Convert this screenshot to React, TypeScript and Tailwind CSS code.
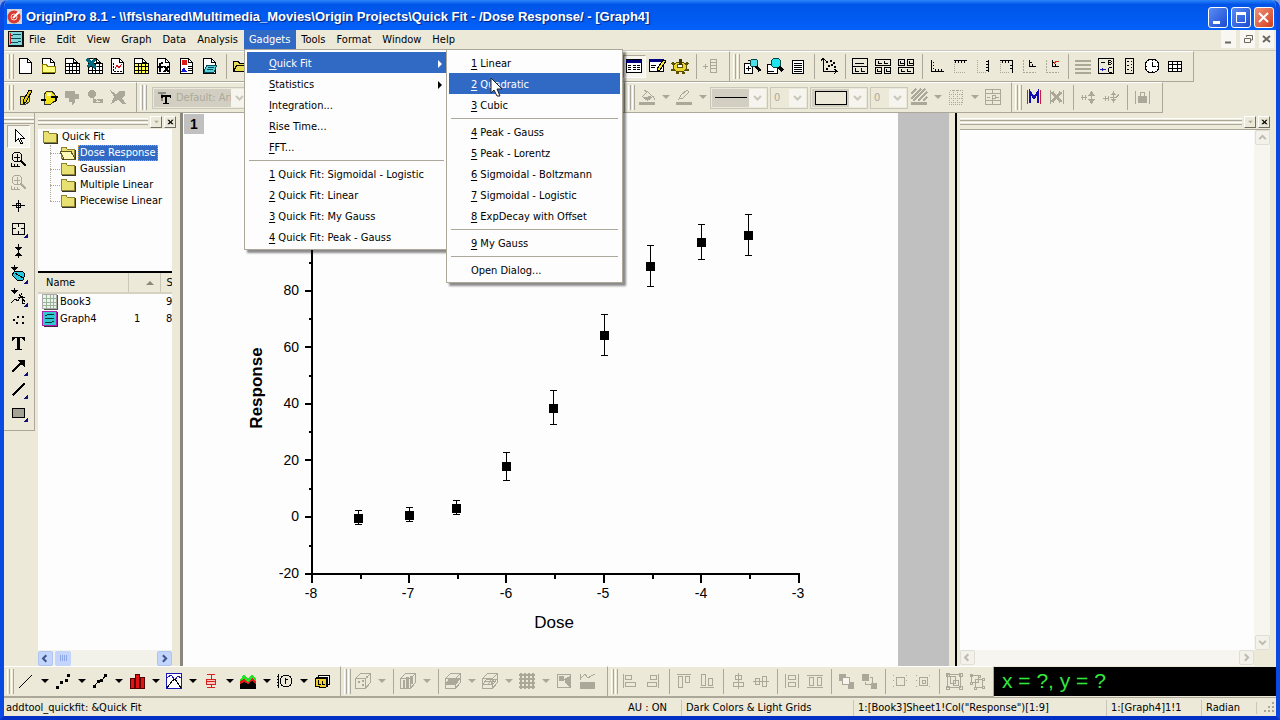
import type { ReactNode } from "react";

const G = "#aca899";

const page = (
    <>
        <path d="M2.5 1.5h8l4 4v11h-12z" fill="#fff" stroke="#000" />
        <path d="M10.5 1.5v4h4" fill="none" stroke="#000" />
    </>
);

const grid = (fill: string) => (
    <>
        <rect x="2.5" y="6.5" width="14" height="10" fill={fill} stroke="#000" />
        <path d="M2 9.5h15M2 13.5h15M6.5 6v11M9.5 6v11M13.5 6v11" stroke="#000" />
    </>
);

const cube = <path d="M1.5 6.5l5-5h10v9l-5 6h-10zM1.5 6.5h10v10M11.5 6.5l5-5" fill="none" stroke={G} />;

const lens = (c: string) => (
    <>
        <circle cx="8" cy="7" r="5" fill="none" stroke={c} />
        <path d="M5 7.5h6M8.5 4v7M2 16.5h9M2.5 13v3M5.5 14v2M8.5 14v2" stroke={c} />
        <path d="M12 11l5 5" stroke={c} strokeWidth="2" />
    </>
);

const ICONS: Record<string, ReactNode> = {
    "New Project": page,
    "New Folder": (
        <>
            {page}
            <path d="M2.5 15.5v-8h4l1 2h8v6z" fill="#ffff7b" stroke="#8a7a00" />
        </>
    ),
    "New Workbook": <>{page}{grid("#fff")}</>,
    "New Excel": (
        <>
            {page}
            {grid("#fff")}
            <path d="M1 2l9 9M9 2l-7 8" stroke="#00667a" strokeWidth="3" />
        </>
    ),
    "New Graph": (
        <>
            {page}
            <path d="M4.5 6v8.5h9" fill="none" stroke="#000" strokeDasharray="2 1" />
            <path d="M6 12l2-4 2 3 3-4" fill="none" stroke="#d01818" />
        </>
    ),
    "New Matrix": <>{page}{grid("#ffff4c")}</>,
    "New Function": (
        <>
            {page}
            <path d="M5 15V8q0-2 3-2M3 10h5M9 9l5 6M14 9l-5 6" fill="none" stroke="#000" strokeWidth="2" />
        </>
    ),
    "New Layout": (
        <>
            {page}
            <path d="M4 3h5v5h-5z" fill="#e01818" />
            <path d="M3 15l3-5 3 5z" fill="#1818d8" />
            <path d="M10 9.5h5M10 11.5h5M10 13.5h5" stroke="#000" />
        </>
    ),
    "New Notes": (
        <>
            {page}
            <path d="M3 14l3-6h10l-3 7h-10z" fill="#5ed0d8" stroke="#004c58" />
            <path d="M7 10.5h6M6 12.5h6" stroke="#004c58" />
        </>
    ),
    Open: <path d="M1.5 14.5v-10h5l1 2h7v2M1.5 14.5l3-6h12l-3 6z" fill="#e8dc50" stroke="#000" />,
    "Project Explorer": (
        <>
            <rect x="1.5" y="2.5" width="15" height="13" fill="#fff" stroke="#000" />
            <path d="M1 3h16v3h-16z" fill="#000080" />
            <path d="M3 8.5h3M8 8.5h3M12 8.5h3M3 10.5h3M8 10.5h3M12 10.5h3M3 12.5h3M8 12.5h3M12 12.5h3" stroke="#000" />
        </>
    ),
    "Results Log": (
        <>
            <rect x="1.5" y="2.5" width="14" height="12" fill="#fff" stroke="#000" />
            <path d="M1 2h15v3h-15z" fill="#000080" />
            <path d="M3 8.5h5M3 10.5h4" stroke="#000" />
            <path d="M15 3l-6 9v3l3-2 6-9z" fill="#ffe820" stroke="#000" />
        </>
    ),
    "Custom Routine": (
        <>
            <path d="M9 4v-2M3 6l-2 2M15 6l2 2M2 12l-1 2M16 12l1 2M6 15v2M12 15v2" stroke="#5a5000" strokeWidth="3" />
            <ellipse cx="9" cy="10" rx="7" ry="5" fill="#ead62c" stroke="#5a5000" />
            <ellipse cx="9" cy="9" rx="3" ry="2" fill="#fff" stroke="#5a5000" />
            <path d="M8 2h3v6h-3z" fill="#3a3400" />
        </>
    ),
    "Add Columns": (
        <>
            <path d="M1 9.5h5M3.5 7v5" stroke={G} />
            <path d="M8.5 2.5h6v13h-6zM8 5.5h6M8 8.5h6M8 11.5h6" fill="none" stroke={G} />
        </>
    ),
    "Zoom Pages": (
        <>
            <path d="M1.5 6.5h8v10h-8zM5 3.5h5M3 11.5h5M5.5 9v5" fill="#fff" stroke="#000" />
            <circle cx="11" cy="6" r="4" fill="#4ce0e8" stroke="#044" />
            <path d="M13 9l4 5" stroke="#000" strokeWidth="3" />
        </>
    ),
    "Zoom Sheet": (
        <>
            <path d="M1.5 7.5h10v9h-10zM1 14.5h7" fill="#fff" stroke="#000" />
            <circle cx="10" cy="6" r="5" fill="#20e4ec" stroke="#044" />
            <path d="M13 10l4 4" stroke="#000" strokeWidth="3" />
        </>
    ),
    "Whole Page": (
        <>
            <rect x="3.5" y="3.5" width="11" height="13" fill="#fff" stroke="#000" />
            <path d="M5 6.5h8M5 8.5h8M5 10.5h8M5 12.5h8M5 14.5h8" stroke="#000" />
        </>
    ),
    Rescale: (
        <>
            <path d="M3.5 1v13.5h14M1 4l2-3 3 3M14 12l3 2-3 3" fill="none" stroke="#000" />
            <path d="M6 4h2v2h-2zM10 3h2v2h-2zM13 5h2v2h-2zM8 8h2v2h-2zM11 7h2v2h-2zM14 9h2v2h-2zM6 11h2v2h-2z" fill="#000" />
        </>
    ),
    "Two Panels": <path d="M1.5 1.5h15v15h-15zM1 9.5h16M4 6.5h9M4.5 11v3.5h3M10.5 11v3.5h3" fill="none" stroke="#000" />,
    "Four Panels": <path d="M1.5 2.5h15v6h-15zM1.5 10.5h6v6h-6zM10.5 10.5h6v6h-6zM4.5 4v2.5h3M10.5 4v2.5h3M3.5 12v2.5h3M12.5 12v2.5h3" fill="none" stroke="#000" />,
    "Nine Panels": <path d="M1.5 2.5h6v6h-6zM10.5 2.5h6v6h-6zM1.5 10.5h15v6h-15zM3.5 4v2.5h3M12.5 4v2.5h3M4.5 12v2.5h3M10.5 12v2.5h3" fill="none" stroke="#000" />,
    "Axis Bottom Left": <path d="M3.5 3v11.5h12M5 5.5h1M5 8.5h1M5 11.5h1M7.5 12v2M10.5 12v2M13.5 12v2" fill="none" stroke="#000" />,
    "Axis Top": (
        <>
            <path d="M3.5 5v10.5h11" fill="none" stroke={G} strokeDasharray="1 1" />
            <path d="M3 3.5h13M4.5 4v2M7.5 4v2M10.5 4v2M13.5 4v2" stroke="#000" />
        </>
    ),
    "Axis Right": (
        <>
            <path d="M3.5 3v12.5h9" fill="none" stroke={G} strokeDasharray="1 1" />
            <path d="M14.5 3v12M12 4.5h2M12 7.5h2M12 10.5h2M12 13.5h2" stroke="#000" />
        </>
    ),
    "Axis Top Right": (
        <>
            <path d="M3.5 5v10.5h9" fill="none" stroke={G} strokeDasharray="1 1" />
            <path d="M3 3.5h12.5v12M5.5 4v2M8.5 4v2M11.5 4v2M13 8.5h2M13 11.5h2" fill="none" stroke="#000" />
        </>
    ),
    "Inset Graph": (
        <>
            <path d="M3.5 3v12.5h12" fill="none" stroke={G} strokeDasharray="2 1" />
            <path d="M9.5 3v6.5h6M10 5.5h2M12.5 7v2" fill="none" stroke="#000" />
        </>
    ),
    "Inset Data": (
        <>
            <path d="M3.5 3v12.5h12" fill="none" stroke={G} strokeDasharray="2 1" />
            <path d="M9.5 3v6.5h6M10 5.5h2M12.5 7v2" fill="none" stroke="#000" />
            <path d="M11 7l2-3h3" fill="none" stroke="#d03010" />
        </>
    ),
    "Color Scale": <path d="M1 4h16M1 8h16M1 12h16M1 16h16" stroke={G} strokeWidth="2" />,
    Legend: (
        <>
            <rect x="1.5" y="1.5" width="15" height="15" fill="none" stroke="#000" />
            <path d="M4 5.5h4M11.5 3v5M11 3.5h3M11 5.5h3M11 7.5h3M14.5 4v1M14.5 6v1M12 10.5h3M11.5 11v4M12 15.5h3" stroke="#000" />
            <path d="M3 12.5h6M5.5 11v3" stroke="#1818c8" />
        </>
    ),
    "XY Scale": <path d="M5.5 1.5h8v15h-8zM7 4.5h2M7 8.5h2M7 12.5h2M11 4.5h1M11 7.5h1M11 10.5h1M11 13.5h1" fill="none" stroke="#000" />,
    "Date and Time": (
        <>
            <circle cx="9" cy="9" r="7" fill="#fff" stroke="#000" />
            <path d="M9 5v4.5h4M9 3v1M9 14v1M3 9h1M14 9h1" fill="none" stroke="#000" />
        </>
    ),
    "New Table": <path d="M2.5 4.5h13v10h-13zM2 7.5h14M2 11.5h14M6.5 4v11M11.5 4v11" fill="#fff" stroke="#000" />,
    "Edit Mode": (
        <>
            <path d="M3 8h9v6l-3 2h-6z" fill="#e8e020" stroke="#333" />
            <path d="M12 2l3 1-6 11-3 2v-3z" fill="#e0c010" stroke="#000" />
        </>
    ),
    "Add Plot": (
        <>
            <path d="M4 7l3-4h5l3 4v6l-4 3h-7z" fill="#f0e418" stroke="#333" />
            <path d="M1 12h5M11 9h6l-2 5" fill="none" stroke="#000" strokeWidth="2" />
            <path d="M7 5h4v3h-4z" fill="#fffbb0" />
        </>
    ),
    "Grid Tool": <path d="M2 3h10v3h4v5h-4v3l-3 3v-3h-3v-4h-4z" fill={G} />,
    "Mask Tool": (
        <>
            <circle cx="6" cy="6" r="4" fill={G} />
            <path d="M7 10v4h8M9 14l3-3h4v3z" stroke={G} fill={G} />
        </>
    ),
    "Clear Tool": <path d="M1 2l6 4 3-3h6v5l-3 2 4 6h-4l-4-4-7 4 3-7z" fill={G} />,
    "Fill Color": (
        <>
            <path d="M4.5 8.5l5-5 5 5-5 4zM9 4l-3-2M15 8l2 4" fill="none" stroke={G} />
            <path d="M5 9l4 3 5-4z" fill={G} />
            <path d="M1 14h16v3h-16z" fill={G} />
        </>
    ),
    "Line Color": (
        <>
            <path d="M4 11l2-4 6-5 2 2-6 6z" fill="none" stroke={G} />
            <path d="M1 14h16v3h-16z" fill={G} />
        </>
    ),
    "Fill Pattern": (
        <>
            <path d="M1 6l5-5M1 11l10-10M3 13l12-12M8 13l9-9M13 13l4-4" stroke={G} strokeWidth="2" />
            <path d="M1 14h16v3h-16z" fill={G} />
        </>
    ),
    "Grid Lines": <path d="M2.5 2.5h13v12h-13zM2 6.5h13M2 10.5h13M6.5 2v13M10.5 2v13M2 16.5h14" fill="none" stroke={G} strokeDasharray="1 1" />,
    "Merge Cells": <path d="M1.5 1.5h15v15h-15zM1 5.5h15M1 12.5h15M8.5 1v4M8.5 13v3M3 9.5h3M12 9.5h3M8 7.5h3v3h-3zM8 11v1" fill="none" stroke={G} />,
    "Mask Points": (
        <>
            <path d="M2.5 2v14M15.5 2v14" stroke="#d01838" />
            <path d="M5 15v-11l4 6 4-6v11" fill="none" stroke="#1010b0" strokeWidth="2" />
        </>
    ),
    "Unmask Points": (
        <>
            <path d="M2.5 2v14M15.5 2v14" stroke={G} />
            <path d="M4 4l9 10M13 4l-9 10" stroke={G} strokeWidth="3" />
        </>
    ),
    "Move Points": (
        <>
            <path d="M2 9.5h6M3.5 7v5M6.5 7v5M12.5 4v11" stroke={G} />
            <path d="M9 8l3.5-5 3.5 5zM9 11l3.5 5 3.5-5z" fill={G} />
        </>
    ),
    "Swap Points": (
        <>
            <path d="M1 10.5h6M3.5 8v5M6.5 8v5M8 9.5h6l3-3M11.5 4v10" fill="none" stroke={G} />
            <path d="M9 7l2.5-4 2.5 4zM9 11l2.5 4 2.5-4z" fill={G} />
        </>
    ),
    Lock: (
        <>
            <path d="M5 8h9v7h-9z" fill={G} />
            <path d="M7.5 8v-3.5h4v3.5M2.5 3v13M16.5 3v13" fill="none" stroke={G} />
        </>
    ),
    Pointer: <path d="M6.5 2.5v12l3-3 2 5h2l-2-5h4z" fill="#fff" stroke="#000" />,
    "Zoom In": lens("#000"),
    "Zoom Out": lens(G),
    "Screen Reader": <path d="M3 9.5h13M9.5 4v12M7.5 7.5h4v4h-4z" fill="none" stroke="#000" />,
    "Data Reader": <path d="M3.5 4.5h12v11h-12zM9.5 4v4M9.5 12v4M3 9.5h4M12 9.5h4" fill="none" stroke="#000" />,
    "Data Selector": (
        <>
            <path d="M9.5 2v14" stroke="#000" />
            <path d="M6 5h7l-3.5 4zM6 14h7l-3.5-4z" fill="#000" />
        </>
    ),
    "Selection Mask": (
        <>
            <path d="M5.5 0v4" stroke="#000" />
            <path d="M2 2h7l-3.5 4z" fill="#000" />
            <path d="M3 10l3-4h7l3 3-2 6h-6z" fill="#28c8dc" stroke="#000" />
            <path d="M6 8l8 5" stroke="#000" />
        </>
    ),
    "Draw Data": (
        <>
            <path d="M5.5 0v4" stroke="#000" />
            <path d="M2 2h7l-3.5 4z" fill="#000" />
            <path d="M2 15l4-4 3 2 4-8M9 9h7M10 6l6 8M13 8v7h3" fill="none" stroke="#000" />
        </>
    ),
    "Point Cluster": <path d="M4 8h2v2h-2zM8 5h2v2h-2zM13 5h2v2h-2zM7 11h2v2h-2zM13 11h2v2h-2z" fill="#000" />,
    Text: <path d="M3 3h13v4h-1q0-2-3-3h-1v10q0 1 2 1v1h-7v-1q2 0 2-1v-10h-1q-3 1-3 3h-1z" fill="#000" />,
    Arrow: <path d="M3 15l9-9" stroke="#000" strokeWidth="2" />,
    Line: <path d="M3.5 15.5l12-12" stroke="#000" strokeWidth="2" />,
    Rectangle: <rect x="3" y="5" width="12" height="9" fill="#a4a294" stroke="#000" />,
    "Line Plot": <path d="M2 16L15 3" stroke="#000" />,
    "Scatter Plot": <path d="M2 14h3v3h-3zM6 9h3v3h-3zM11 7h3v3h-3zM13 2h3v3h-3z" fill="#000" />,
    "Line Symbol": (
        <>
            <path d="M2 13h3v3h-3zM6 8h3v3h-3zM9 7h3v3h-3zM13 2h3v3h-3z" fill="#000" />
            <path d="M3 14l5-5 3-1 4-5" fill="none" stroke="#000" />
        </>
    ),
    "Column Plot": <path d="M2.5 6.5h4v10h-4zM7.5 2.5h4v14h-4zM12.5 5.5h4v11h-4z" fill="#e01414" stroke="#500" />,
    "Area Plot": (
        <>
            <rect x="1.5" y="1.5" width="15" height="15" fill="#fff" stroke="#1818b8" />
            <path d="M2 6l4-3 4 5 3-4 3 2" fill="none" stroke="#1818b8" />
            <path d="M2 16l5-7 3-2 6 9" fill="none" stroke="#000" />
        </>
    ),
    "Box Chart": (
        <>
            <path d="M5 2.5h8M5 15.5h8M9.5 2v14" stroke="#d82020" />
            <path d="M4.5 7.5h9v5h-9z" fill="#f8c8c0" stroke="#d82020" />
            <path d="M4 9.5h10" stroke="#d82020" />
        </>
    ),
    "Stack Area": (
        <>
            <path d="M1 8l4-6 4 5 4-5 4 5v3h-16z" fill="#28e028" />
            <path d="M1 9l4-2 4 4 4-5 4 3v4h-16z" fill="#e01818" />
            <path d="M1 12l4-2 4 2 4-3 4 3v5h-16z" fill="#000" />
        </>
    ),
    "Polar Plot": (
        <>
            <path d="M2.5 2v14M1 4.5h2M1 7.5h2M1 10.5h2M1 13.5h2" stroke="#000" />
            <circle cx="10" cy="9" r="6" fill="none" stroke="#000" />
            <path d="M9.5 6v6M10 7.5h2" stroke="#000" />
        </>
    ),
    "Template Library": (
        <>
            <path d="M5.5 3.5h11v9h-11z" fill="#fff" stroke="#000" />
            <path d="M3.5 5.5h11v9h-11z" fill="#fff" stroke="#000" />
            <path d="M2 6h11v9l-2 1-9-2z" fill="#f0d030" stroke="#000" />
            <path d="M5.5 8v4h2M9.5 9v3h2" fill="none" stroke="#000" />
        </>
    ),
    "3D Scatter": <>{cube}<path d="M4 9h2v2h-2zM8 12h2v2h-2zM8 8h2v2h-2zM12 4h2v2h-2z" fill={G} /></>,
    "3D Bars": <>{cube}<path d="M4 8h2v8h-2zM7 5h3v11h-3zM11 4h3v8h-3z" fill={G} /></>,
    "3D Surface": <>{cube}<path d="M2 12l4-6h10l-4 6z" fill={G} stroke={G} /></>,
    "3D Wire": <>{cube}<path d="M2 12l4-5h10l-4 5zM4 9.5h11M7 12l4-5M10 12l3-5" fill="none" stroke={G} /></>,
    Contour: <path d="M1 3h16M1 7h16M1 11h16M1 15h16M3 1v16M7 1v16M11 1v16M15 1v16" stroke={G} strokeWidth="2" />,
    Image: (
        <>
            <rect x="2.5" y="2.5" width="13" height="13" fill="none" stroke={G} />
            <path d="M4 4h5v5h-5zM9 7l6-3v11l-4-3z" fill={G} />
        </>
    ),
    Profile: (
        <>
            <path d="M2 10h15v7h-15z" fill={G} />
            <path d="M2.5 2v6M3 6l4-4 3 4 3-2 4-2" fill="none" stroke={G} />
        </>
    ),
    "Align Left": <path d="M2.5 2v14M4.5 3.5h6v4h-6zM4.5 10.5h10v4h-10z" fill="none" stroke={G} />,
    "Align Right": <path d="M14.5 2v14M6.5 3.5h6v4h-6zM3.5 10.5h9v4h-9z" fill="none" stroke={G} />,
    "Align Top": <path d="M2 2.5h14M3.5 4.5h4v11h-4zM10.5 4.5h4v6h-4z" fill="none" stroke={G} />,
    "Align Bottom": <path d="M2 15.5h14M3.5 2.5h4v11h-4zM10.5 6.5h4v7h-4z" fill="none" stroke={G} />,
    "Center Vertical": <path d="M9.5 1v16M6.5 3.5h6v4h-6zM4.5 10.5h10v4h-10z" fill="none" stroke={G} />,
    "Center Horizontal": <path d="M1 9.5h16M3.5 6.5h4v6h-4zM10.5 4.5h4v10h-4z" fill="none" stroke={G} />,
    "Uniform Width": <path d="M2.5 2v14M15.5 2v14M5.5 3.5h7v4h-7zM5.5 10.5h7v4h-7z" fill="none" stroke={G} />,
    "Uniform Height": <path d="M1 3.5h16M1 15.5h16M3.5 5.5h4v8h-4zM11.5 5.5h4v8h-4z" fill="none" stroke={G} />,
    Front: (
        <>
            <path d="M2 2h7v3h-4v4h-3zM11 13h2v-3h4v7h-6z" fill={G} />
            <path d="M5.5 5.5h7v7h-7z" fill="#f6f5ee" stroke={G} />
        </>
    ),
    Back: (
        <>
            <path d="M2 2h7v7h-7zM11 11h6v6h-6z" fill={G} />
            <path d="M9.5 5.5h3v5M5.5 9.5v3h5" fill="none" stroke={G} />
        </>
    ),
    "Front Data": <path d="M5.5 5.5h8v8h-8zM2 3h1M2 8h1M2 14h1M15 3h1M15 8h1" fill="none" stroke={G} />,
    "Back Data": <path d="M5.5 5.5h8v8h-8zM8 8h3v3h-3zM2 3h1M2 8h1M2 14h1M15 3h1M15 14h1" fill="none" stroke={G} />,
    Group: <path d="M2.5 2.5h13v13h-13zM5.5 4.5h5v7h-5zM8.5 8.5h5v5h-5zM1 1h3v3h-3zM14 14h3v3h-3zM14 1h3v3h-3zM1 14h3v3h-3z" fill="none" stroke={G} />,
    Ungroup: <path d="M3.5 3.5h7v7h-7zM7.5 7.5h7v8h-7zM2 2h2v2h-2zM10 3h2v2h-2zM2 10h2v2h-2zM14 6h2v2h-2zM14 14h2v2h-2zM6 15h2v2h-2z" fill="none" stroke={G} />,
};

const PRESSED = ["Project Explorer", "Pointer"];
const FLYOUTS = ["Data Reader", "Selection Mask", "Draw Data", "Arrow", "Line", "Rectangle"];

const ToolButton = ({ name }: { name: string }) => (
    <button
        type="button"
        aria-label={name}
        className={`flex h-[23px] w-[23px] flex-none items-start border pt-px pl-px ${
            PRESSED.includes(name) ? "border-[#aca899] border-r-white border-b-white bg-[#f6f5ee]" : "border-transparent"
        }`}
    >
        <svg width="18" height="18" viewBox="0 0 18 18" shapeRendering="crispEdges" className="flex-none overflow-visible">
            {ICONS[name] ?? ICONS["New Project"]}
            {name === "Arrow" && <path d="M8 3h8v8l-3-3h-2v-2z" fill="#000" />}
            {FLYOUTS.includes(name) && <path d="M19 14v5h-5z" fill="#101078" />}
        </svg>
    </button>
);

const DropArrow = ({ name, off }: { name: string; off: boolean }) => (
    <button type="button" aria-label={`${name} options`} className="flex h-[23px] w-[14px] flex-none items-center justify-center">
        <svg width="8" height="5" viewBox="0 0 8 5">
            <path d="M0 0h8l-4 4z" fill={off ? G : "#000"} />
        </svg>
    </button>
);

const Grip = () => (
    <span className="mr-px ml-[3px] flex flex-none gap-px self-stretch py-0.5">
        <span className="w-[3px] border-r border-l border-r-[#aca899] border-l-white"></span>
        <span className="w-[3px] border-r border-l border-r-[#aca899] border-l-white"></span>
    </span>
);

/* "|" is a separator, a trailing ">" adds a drop arrow, "!" greys that arrow out */
const Tools = ({ items }: { items: string[] }) => (
    <>
        {items.map((item, i) => {
            if (item === "|") {
                return <span key={i} className="mr-[3px] ml-1 h-[25px] w-px flex-none bg-[#aca899]"></span>;
            }
            const name = item.replace(/[>!]/g, "");
            return (
                <span key={i} className="flex flex-none">
                    <ToolButton name={name} />
                    {item.includes(">") && <DropArrow name={name} off={item.includes("!")} />}
                </span>
            );
        })}
    </>
);

const Bar = ({ children, className = "pr-1.5" }: { children: ReactNode; className?: string }) => (
    <div className={`flex h-[31px] flex-none items-center border-t border-r border-b border-t-white border-r-[#aca899] border-b-[#aca899] ${className}`}>
        <Grip />
        {children}
    </div>
);

interface ComboProps {
    label: string;
    options: string[];
    className: string;
    selectClass?: string;
    children?: ReactNode;
}

const Combo = ({ label, options, className, selectClass = "", children }: ComboProps) => (
    <span className={`relative flex h-[22px] flex-none items-center border border-[#c9c7ba] bg-[#ece9d8] p-px ${className}`}>
        <select aria-label={label} disabled className={`h-full min-w-0 flex-1 appearance-none text-[#aca899] ${selectClass}`}>
            {options.map((o) => (
                <option key={o}>{o}</option>
            ))}
        </select>
        <span className="pointer-events-none absolute inset-y-0 left-1 flex items-center">{children}</span>
        <span className="flex h-full w-[17px] flex-none items-center justify-center bg-[#f5f4ee]">
            <svg width="9" height="6" viewBox="0 0 9 6">
                <path d="M1 1l3.5 3.5L8 1" fill="none" stroke="#c9c7ba" strokeWidth="2" />
            </svg>
        </span>
    </span>
);

const NEW_TOOLS = ["New Project", "New Folder", "New Workbook", "New Excel", "New Graph", "New Matrix", "New Function", "New Layout", "New Notes", "|", "Open", "Open", "New Workbook", "New Notes", "|", "New Graph", "New Excel", "New Matrix", "|", "New Project"];
const STANDARD_TOOLS = ["New Layout", "New Graph", "|", "New Table", "Rescale", "New Notes", "Whole Page", "Open", "|", "Project Explorer", "Results Log", "Custom Routine", "|", "Add Columns"];
const GRAPH_TOOLS = ["Zoom Pages", "Zoom Sheet", "Whole Page", "|", "Rescale", "|", "Two Panels", "Four Panels", "Nine Panels", "|", "Axis Bottom Left", "Axis Top", "Axis Right", "Axis Top Right", "Inset Graph", "Inset Data", "|", "Color Scale", "Legend", "XY Scale", "Date and Time", "New Table"];
const FORMAT_TOOLS = ["Text", "Text", "Text", "Text", "Text", "Text", "Align Left", "Center Vertical", "Align Right", "Align Top", "Center Horizontal", "Align Bottom", "Text", "Text"];
const SIDE_TOOLS = ["Pointer", "Zoom In", "Zoom Out", "Screen Reader", "Data Reader", "Data Selector", "Selection Mask", "Draw Data", "Point Cluster", "Text", "Arrow", "Line", "Rectangle"];
const PLOT_TOOLS = ["Line Plot>", "Scatter Plot>", "Line Symbol>", "Column Plot>", "Area Plot>", "Box Chart>", "Stack Area>", "Polar Plot>", "Template Library"];
const PLOT3D_TOOLS = ["3D Scatter>!", "|", "3D Bars>!", "|", "3D Surface>!", "3D Wire>!", "Contour>!", "Image", "Profile"];
const ARRANGE_TOOLS = ["Align Left", "Align Right", "|", "Align Top", "Align Bottom", "|", "Center Vertical", "Center Horizontal", "|", "Uniform Width", "Uniform Height", "|", "Front", "Back", "|", "Front Data", "Back Data", "|", "Group", "Ungroup"];

const GADGETS = ["Quick Fit", "Statistics", "Integration...", "Rise Time...", "FFT...", "", "1 Quick Fit: Sigmoidal - Logistic", "2 Quick Fit: Linear", "3 Quick Fit: My Gauss", "4 Quick Fit: Peak - Gauss"];
const QUICK_FIT = ["1 Linear", "2 Quadratic", "3 Cubic", "", "4 Peak - Gauss", "5 Peak - Lorentz", "6 Sigmoidal - Boltzmann", "7 Sigmoidal - Logistic", "8 ExpDecay with Offset", "", "9 My Gauss", "", "Open Dialog..."];

const Menu = ({ items, active, className, children }: { items: string[]; active: string; className: string; children?: ReactNode }) => (
    <div role="menu" className={`absolute border border-[#aca899] bg-[#fdfdfd] p-0.5 text-black shadow-[3px_3px_2px_rgba(0,0,0,0.45)] ${className}`}>
        {items.map((item, i) =>
            item === "" ? (
                <div key={i} className="mx-0.5 flex h-1.5 items-center">
                    <div className="h-px w-full bg-[#aca899]"></div>
                </div>
            ) : (
                <button
                    key={i}
                    type="button"
                    role="menuitem"
                    className={`flex h-[21px] w-full items-center justify-between pt-0.5 pr-1 pl-[22px] whitespace-nowrap ${item === active ? "bg-[#316ac5] text-white" : ""}`}
                >
                    <span>
                        <span className={item === "Open Dialog..." ? "" : "underline underline-offset-2"}>{item[0]}</span>
                        {item.slice(1)}
                    </span>
                    {(item === "Quick Fit" || item === "Statistics") && (
                        <svg width="4" height="8" viewBox="0 0 4 8">
                            <path d="M0 0v8l4-4z" fill="currentColor" />
                        </svg>
                    )}
                </button>
            )
        )}
        {children}
    </div>
);

const MenuBar = () => (
    <nav className="flex h-[21px] flex-none items-start border-b border-[#c9c7ba] pl-1">
        <svg width="16" height="16" viewBox="0 0 16 16" shapeRendering="crispEdges" className="mt-px flex-none">
            <path d="M0 0h16v16h-16z" fill="#111" />
            <path d="M1 1h13v13h-13z" fill="#7fd8dc" />
            <path d="M3 5l4-2 3 1 3-1M3 8l4-1 3 1 3-1M3 11l4 1 6-2" fill="none" stroke="#0a4a50" />
            <path d="M2 2v11" stroke="#c02020" />
        </svg>
        {["File", "Edit", "View", "Graph", "Data", "Analysis", "Gadgets", "Tools", "Format", "Window", "Help"].map((m) =>
            m === "Gadgets" ? (
                <div key={m} className="relative z-20">
                    <button type="button" className="h-[19px] bg-[#316ac5] pr-1.5 pl-[5px] text-white">{m}</button>
                    <Menu items={GADGETS} active="Quick Fit" className="top-[19px] left-0 w-[205px]">
                        <Menu items={QUICK_FIT} active="2 Quadratic" className="-top-px left-[201px] w-[177px]">
                            <svg width="13" height="20" viewBox="0 0 13 20" className="pointer-events-none absolute top-[27px] left-[43px]">
                                <path d="M1 1v15l3-3 3 6h3l-3-7h5z" fill="#fff" stroke="#222" />
                            </svg>
                        </Menu>
                    </Menu>
                </div>
            ) : (
                <button key={m} type="button" className="h-[19px] pr-1.5 pl-[5px]">{m}</button>
            )
        )}
        <div className="ml-auto flex gap-1 pr-0.5">
            {["M4 12.5h6", "M4.5 8.5h6v4h-6zM6.5 7v-1.5h6v4.5h-2", "M4 6l7 6M11 6l-7 6"].map((d, i) => (
                <button key={d} type="button" aria-label={["Minimize", "Restore", "Close"][i]} className="h-[18px] w-[15px] bg-[#f8f7f2]">
                    <svg width="15" height="18" viewBox="0 0 15 18">
                        <path d={d} fill="none" stroke="#6a675c" strokeWidth={i === 1 ? 1 : 2} />
                    </svg>
                </button>
            ))}
        </div>
    </nav>
);

const TitleBar = () => (
    <header className="-mx-1 flex h-[30px] flex-none items-center bg-linear-to-b from-[#2b84f8] via-[#0055e8] via-15% to-[#0360f8] pr-1.5 pl-[7px]">
        <svg width="15" height="16" viewBox="0 0 15 16" className="mt-1 mr-1">
            <rect width="15" height="15" fill="#d8d4dc" />
            <circle cx="7" cy="8" r="6.5" fill="#d83a30" />
            <circle cx="7" cy="8" r="3" fill="none" stroke="#ffd8d0" />
            <path d="M6 9l6-6" stroke="#fff" strokeWidth="2" />
        </svg>
        <h1 className="mt-1 min-w-0 flex-1 truncate font-['Liberation_Sans',sans-serif] text-[13px] font-bold text-white [text-shadow:1px_1px_1px_#00207a]">
            OriginPro 8.1 - \\ffs\shared\Multimedia_Movies\Origin Projects\Quick Fit - /Dose Response/ - [Graph4]
        </h1>
        <div className="mt-1 flex gap-[3px]">
            <button type="button" aria-label="Minimize" className="h-[21px] w-5 rounded-[3px] border border-white bg-linear-to-br from-[#5c8cf4] to-[#1c48d0]">
                <svg width="18" height="19" viewBox="0 0 18 19"><path d="M4 13h7v3h-7z" fill="#fff" /></svg>
            </button>
            <button type="button" aria-label="Maximize" className="h-[21px] w-5 rounded-[3px] border border-white bg-linear-to-br from-[#5c8cf4] to-[#1c48d0]">
                <svg width="18" height="19" viewBox="0 0 18 19"><path d="M4.5 5v9.5h9v-9.5" fill="none" stroke="#fff" /><path d="M4 4h10v3h-10z" fill="#fff" /></svg>
            </button>
            <button type="button" aria-label="Close" className="h-[21px] w-5 rounded-[3px] border border-white bg-linear-to-br from-[#f09078] to-[#d03c14]">
                <svg width="18" height="19" viewBox="0 0 18 19"><path d="M4 5l9 9M13 5l-9 9" stroke="#fff" strokeWidth="2" /></svg>
            </button>
        </div>
    </header>
);

const PaneHeader = () => (
    <div className="flex h-[15px] flex-none items-center gap-0.5">
        <div className="flex flex-1 flex-col gap-px">
            <div className="h-[3px] border-t border-b border-t-white border-b-[#aca899]"></div>
            <div className="h-[3px] border-t border-b border-t-white border-b-[#aca899]"></div>
        </div>
        {["M3 4h5l-2.5 3z", "M2 3h2l1.5 2L7 3h2L6.5 5.5 9 8H7L5.5 6.5 4 8H2l2.5-2.5z"].map((d, i) => (
            <button key={i} type="button" aria-label={i ? "Close pane" : "Pane menu"} className="h-3 w-3 flex-none border border-white border-r-[#716f64] border-b-[#716f64]">
                <svg width="11" height="10" viewBox="0 0 11 11">
                    <path d={d} fill={i ? "#000" : G} />
                </svg>
            </button>
        ))}
    </div>
);

const Folder = ({ open }: { open?: boolean }) => (
    <svg width="16" height="14" viewBox="0 0 16 14" shapeRendering="crispEdges" className="flex-none">
        <path d="M1 3l1-2h4l1 2h7v9h-13z" fill="#e8e070" stroke="#8c8230" />
        <path d="M15 4v9.5h-13" fill="none" stroke="#333" />
        {open && <path d="M0 5.5h11l4 7.5h-11z" fill="#fbf8b8" stroke="#5a5420" />}
    </svg>
);

const ScrollButton = ({ d, on }: { d: string; on?: boolean }) => (
    <button type="button" aria-label="Scroll" className={`h-[15px] w-[15px] flex-none rounded-[2px] border ${on ? "border-[#b0c4f4] bg-[#c3d5fd]" : "border-[#e0ded4] bg-[#f2f1ea]"}`}>
        <svg width="13" height="13" viewBox="0 0 16 16">
            <path d={d} fill="none" stroke={on ? "#3c5488" : "#bdbbae"} strokeWidth="2.5" />
        </svg>
    </button>
);

const Explorer = () => (
    <aside className="flex w-[142px] flex-none flex-col pr-2">
        <div className="-mr-1 flex flex-col pt-px">
            <PaneHeader />
        </div>
        <div className="flex h-[142px] flex-none flex-col bg-[#fdfdfd]">
            <div className="flex h-4 items-center gap-1 pl-1">
                <Folder /> Quick Fit
            </div>
            <ul className="relative ml-3">
                <li aria-hidden="true" className="absolute top-0 bottom-2 left-0 border-l border-dotted border-[#aca899]"></li>
                {["Dose Response", "Gaussian", "Multiple Linear", "Piecewise Linear"].map((f, i) => (
                    <li key={f} className="flex h-4 items-center whitespace-nowrap">
                        <span className="w-2.5 border-t border-dotted border-[#aca899]"></span>
                        <Folder open={i === 0} />
                        <span className={`ml-0.5 px-0.5 ${i === 0 ? "bg-[#316ac5] text-white outline-1 -outline-offset-1 outline-dotted outline-[#d8a040]" : ""}`}>{f}</span>
                    </li>
                ))}
            </ul>
        </div>
        <div className="flex min-h-0 flex-1 flex-col border-t-2 border-black bg-[#fdfdfd]">
            <table className="w-full table-fixed text-left">
                <thead>
                    <tr className="h-5 border-b-2 border-[#d6d2c2] bg-[#ece9d8]">
                        <th className="w-[90px] border-r border-[#c9c7ba] pl-2 font-normal">Name</th>
                        <th aria-label="Views" className="w-[32px] border-r border-[#c9c7ba]">
                            <svg width="8" height="4" viewBox="0 0 8 4" className="ml-auto mr-1.5"><path d="M0 4h8l-4-4z" fill="#8a887a" /></svg>
                        </th>
                        <th className="overflow-hidden pl-1.5 font-normal">S</th>
                    </tr>
                </thead>
                <tbody>
                    {[["Book3", "", "9"], ["Graph4", "1", "8"]].map(([name, views, size], i) => (
                        <tr key={name} className="h-[17px]">
                            <td className="pl-1">
                                <span className="flex items-center gap-0.5">
                                    <svg width="16" height="16" viewBox="0 0 16 16" shapeRendering="crispEdges" className="flex-none">
                                        <rect x=".5" y=".5" width="14" height="14" fill={i ? "#30c8d0" : "#eef2ec"} stroke={i ? "#b020b0" : "#aaa"} />
                                        {i ? (
                                            <path d="M3 5l4-2 5 1M3 8l4-1 5 1M3 11l5 1 4-2" fill="none" stroke="#033" />
                                        ) : (
                                            <path d="M1 4.5h14M1 8.5h14M1 11.5h14M4.5 1v14M8.5 1v14M11.5 1v14" stroke="#9ab49a" />
                                        )}
                                        <path d="M15.5 1v14.5h-14" fill="none" stroke={i ? "#402040" : "#555"} />
                                    </svg>
                                    {name}
                                </span>
                            </td>
                            <td className="pl-1.5">{views}</td>
                            <td className="pl-1.5">{size}</td>
                        </tr>
                    ))}
                </tbody>
            </table>
            <div className="mt-auto flex h-4 items-center bg-[#f3f2ea]">
                <ScrollButton d="M9 4L5 8l4 4" on />
                <div className="ml-0.5 flex h-[15px] w-4 items-center justify-center gap-px rounded-[2px] bg-[#c3d5fd]">
                    {[0, 1, 2, 3].map((n) => (
                        <span key={n} className="h-1.5 w-px bg-[#8ca6e8]"></span>
                    ))}
                </div>
                <span className="flex-1"></span>
                <ScrollButton d="M6 4l4 4-4 4" on />
            </div>
        </div>
    </aside>
);

/* x, y, upper and lower ends of the error bar */
const POINTS = [
    [358, 518, 511, 524],
    [409, 515, 508, 521],
    [456, 508, 501, 514],
    [506, 466, 453, 480],
    [553, 408, 391, 424],
    [604, 335, 315, 355],
    [650, 266, 246, 286],
    [701, 242, 225, 259],
    [748, 235, 215, 255],
];

const Chart = () => (
    <svg width="715" height="553" viewBox="183 113 715 553" className="block font-['Liberation_Sans',sans-serif]" role="img" aria-label="Response against dose">
        <g stroke="#000" strokeWidth="2" shapeRendering="crispEdges">
            <path d="M312 200V574H800" fill="none" />
            {[574, 517, 460, 404, 347, 291, 234].map((y) => (
                <path key={y} d={`M305 ${y}h7M309 ${y - 28}h3`} />
            ))}
            {[312, 409, 506, 604, 701, 799].map((x) => (
                <path key={x} d={`M${x} 574v9${x < 799 ? `M${x + 49} 574v5` : ""}`} />
            ))}
        </g>
        <g shapeRendering="crispEdges">
            {POINTS.map(([x, y, a, b]) => (
                <g key={x}>
                    <path d={`M${x + 0.5} ${a}V${b}M${x - 3} ${a - 0.5}h7M${x - 3} ${b + 0.5}h7`} stroke="#000" />
                    <rect x={x - 4} y={y - 4} width="9" height="9" />
                </g>
            ))}
        </g>
        <g fontSize="14" textAnchor="end">
            {[80, 60, 40, 20, 0, -20].map((v, i) => (
                <text key={v} x="299" y={295 + Math.round(i * 56.6)}>{v}</text>
            ))}
        </g>
        <g fontSize="14" textAnchor="middle">
            {[-8, -7, -6, -5, -4, -3].map((v, i) => (
                <text key={v} x={311 + Math.round(i * 97.4)} y="598">{v}</text>
            ))}
        </g>
        <text x="554" y="628" fontSize="17" textAnchor="middle">Dose</text>
        <text transform="translate(262 388) rotate(-90)" fontSize="17" fontWeight="bold" textAnchor="middle">Response</text>
    </svg>
);

const Workspace = () => (
    <main className="flex min-h-0 flex-1">
        <div className="flex w-[34px] flex-none flex-col">
            <div className="flex w-[31px] flex-col border-r border-b border-[#aca899] pb-1.5">
                <div className="mt-1 mb-px flex flex-col gap-px">
                    <div className="h-[3px] border-t border-b border-t-white border-b-[#aca899]"></div>
                    <div className="h-[3px] border-t border-b border-t-white border-b-[#aca899]"></div>
                </div>
                <div className="pl-[3px]">
                    {SIDE_TOOLS.map((t) => (
                        <ToolButton key={t} name={t} />
                    ))}
                </div>
            </div>
        </div>
        <Explorer />
        <section className="flex min-w-0 flex-1 border-l-3 border-[#8a887c] bg-[#c0c0c0]">
            <div className="relative min-w-0 flex-1 overflow-hidden bg-[#fdfdfd]">
                <button type="button" className="absolute top-px left-px h-5 w-5 bg-[#c0c0c0] font-['Liberation_Sans',sans-serif] text-sm font-bold">1</button>
                <Chart />
            </div>
            <div className="w-[51px] flex-none"></div>
        </section>
        <aside className="flex w-[327px] flex-none pl-1.5">
            <div className="w-0.5 flex-none bg-black"></div>
            <div className="ml-[3px] flex min-w-0 flex-1 flex-col pr-1.5">
                <div className="pt-px">
                    <PaneHeader />
                </div>
                <div className="flex min-h-0 flex-1 border-t border-[#aca899]">
                    <div className="flex-1 bg-[#fdfdfd]"></div>
                    <div className="flex w-4 flex-none flex-col items-center justify-between bg-[#f6f5f0]">
                        <ScrollButton d="M4 10l4-4 4 4" />
                        <ScrollButton d="M4 6l4 4 4-4" />
                    </div>
                </div>
                <div className="flex h-4 flex-none">
                    <div className="flex flex-1 justify-between bg-[#f6f5f0]">
                        <ScrollButton d="M9 4L5 8l4 4" />
                        <ScrollButton d="M6 4l4 4-4 4" />
                    </div>
                    <div className="w-4"></div>
                </div>
            </div>
        </aside>
    </main>
);

const StatusBar = () => (
    <footer className="flex h-[19px] flex-none items-center border-t border-[#aca899] pt-0.5 whitespace-nowrap">
        <div className="flex-1 pl-0.5">addtool_quickfit: &amp;Quick Fit</div>
        <div className="w-[53px]">AU : ON</div>
        <div className="w-[172px] border-l border-[#c9c7ba] pl-1">Dark Colors &amp; Light Grids</div>
        <div className="w-[253px] border-l border-[#c9c7ba] pl-1">1:[Book3]Sheet1!Col("Response")[1:9]</div>
        <div className="w-[95px] border-l border-[#c9c7ba] pl-1">1:[Graph4]1!1</div>
        <div className="w-[55px] border-l border-[#c9c7ba] pl-1">Radian</div>
        <div className="flex w-5 justify-end border-l border-[#c9c7ba]">
            <svg width="12" height="12" viewBox="0 0 12 12">
                <path d="M8 0h2v2h-2zM4 4h2v2h-2zM8 4h2v2h-2zM0 8h2v2h-2zM4 8h2v2h-2zM8 8h2v2h-2z" fill={G} />
            </svg>
        </div>
    </footer>
);

export default function App() {
    return (
        <div className="bg-[#7f9fe0]">
            <div className="flex h-screen flex-col overflow-hidden rounded-t-lg border-x-4 border-b-4 border-x-[#0a4ae4] border-b-[#0230c4] bg-[#ece9d8] font-['DejaVu_Sans_Condensed','DejaVu_Sans',sans-serif] text-[11px] leading-4 text-black">
                <TitleBar />
                <MenuBar />
                <div className="flex flex-none">
                    <Bar className="pr-1"><Tools items={NEW_TOOLS} /></Bar>
                    <Bar><Tools items={STANDARD_TOOLS} /></Bar>
                    <Bar><Tools items={GRAPH_TOOLS} /></Bar>
                </div>
                <div className="flex flex-none">
                    <Bar><Tools items={["Edit Mode", "Add Plot", "Grid Tool", "Mask Tool", "Clear Tool"]} /></Bar>
                    <Bar>
                        <Combo label="Font" options={["Default: Arial"]} className="ml-1 w-[98px]" selectClass="bg-[#d2cfc2] pl-[22px]">
                            <svg width="16" height="16" viewBox="0 0 16 16" shapeRendering="crispEdges">
                                <path d="M1 2h8v2h-3v7h-2v-7h-3z" fill="#888" />
                                <path d="M4 5h10v3h-1l-1-1h-2v6h2v1h-6v-1h2v-6h-2l-1 1h-1z" fill="#000" />
                            </svg>
                        </Combo>
                        <Combo label="Font size" options={["22"]} className="w-[46px]" />
                        <Tools items={FORMAT_TOOLS} />
                    </Bar>
                    <Bar>
                        <Tools items={["Fill Color>!", "Line Color>!"]} />
                        <Combo label="Line style" options={[""]} className="mr-0.5 w-[58px]" selectClass="bg-[#d2cfc2]">
                            <span className="h-px w-8 bg-black"></span>
                        </Combo>
                        <Combo label="Line width" options={["0"]} className="mr-0.5 w-[38px]" selectClass="pl-0.5" />
                        <Combo label="Border style" options={[""]} className="mr-0.5 w-[58px]" selectClass="bg-[#d2cfc2]">
                            <span className="h-[14px] w-8 border border-black bg-[#ece9d8]"></span>
                        </Combo>
                        <Combo label="Border width" options={["0"]} className="w-[38px]" selectClass="pl-0.5" />
                        <Tools items={["Fill Pattern>!", "Grid Lines>!", "Merge Cells"]} />
                    </Bar>
                    <Bar className="pr-2"><Tools items={["Mask Points", "Unmask Points", "|", "Move Points", "Swap Points", "|", "Lock"]} /></Bar>
                </div>
                <Workspace />
                <div className="flex flex-none">
                    <Bar><Tools items={PLOT_TOOLS} /></Bar>
                    <Bar className="pr-2"><Tools items={PLOT3D_TOOLS} /></Bar>
                    <Bar className="pr-1"><Tools items={ARRANGE_TOOLS} /></Bar>
                    <output className="my-px min-w-0 flex-1 bg-black pl-2 font-['Liberation_Sans',sans-serif] text-[21px] leading-7 whitespace-nowrap text-[#33e83c]">
                        x = ?, y = ?
                    </output>
                </div>
                <StatusBar />
            </div>
        </div>
    );
}
